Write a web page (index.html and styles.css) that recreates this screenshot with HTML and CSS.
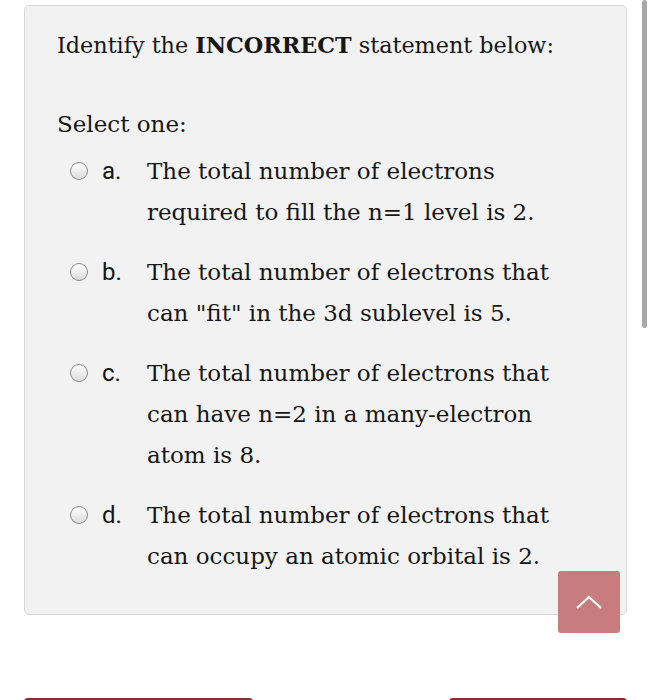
FILE: index.html
```html
<!DOCTYPE html>
<html>
  <head>
    <title>Quiz question</title>
    <link rel="stylesheet" href="styles.css">
  </head>
  <body>
    <div class="page">
      <div class="card">
        <p class="question">Identify the <strong>INCORRECT</strong> statement below:</p>
        <div class="prompt">Select one:</div>
        <div class="answers">
          <label class="answer">
            <span class="radio"></span>
            <span class="letter">a.</span>
            <span class="text">The total number of electrons required to fill the n=1 level is 2.</span>
          </label>
          <label class="answer">
            <span class="radio"></span>
            <span class="letter">b.</span>
            <span class="text">The total number of electrons that can "fit" in the 3d sublevel is 5.</span>
          </label>
          <label class="answer">
            <span class="radio"></span>
            <span class="letter">c.</span>
            <span class="text">The total number of electrons that can have n=2 in a many-electron atom is 8.</span>
          </label>
          <label class="answer">
            <span class="radio"></span>
            <span class="letter">d.</span>
            <span class="text">The total number of electrons that can occupy an atomic orbital is 2.</span>
          </label>
        </div>
        <a class="to-top" href="#">
          <svg width="26" height="14" viewBox="0 0 26 14"><path d="M1 13 L13 2 L25 13" fill="none" stroke="#fff" stroke-width="2.2"/></svg>
        </a>
      </div>
      <div class="nav">
        <a class="nav-btn prev" href="#"></a>
        <a class="nav-btn next" href="#"></a>
      </div>
    </div>
    <div class="scrollbar"></div>
  </body>
</html>
```

FILE: styles.css
```css
body {
  margin: 0;
  background-color: #fff;
  font-family: "DejaVu Serif", serif;
  color: #161616;
  overflow: hidden;
}

.page {
  padding: 5px 26px 0 24px;
}

.card {
  position: relative;
  background-color: #f2f2f2;
  border: 1px solid #d8d8d8;
  border-radius: 5px;
  padding: 26px 20px 30px 32px;
  height: 552px;
}

.question {
  margin: 0;
  font-size: 22.3px;
  line-height: 26px;
}

.question strong {
  font-weight: bold;
}

.prompt {
  margin-top: 53px;
  font-size: 23px;
  line-height: 26px;
}

.answers {
  margin-top: 14px;
}

.answer {
  display: flex;
  align-items: flex-start;
  margin-bottom: 19px;
}

.radio {
  flex: none;
  width: 16px;
  height: 16px;
  margin: 11px 0 0 13px;
  border: 1px solid #8a8a8a;
  border-radius: 50%;
  background: linear-gradient(#ffffff, #dcdcdc);
}

.letter {
  flex: none;
  width: 45px;
  margin-left: 14px;
  font-family: Roboto, sans-serif;
  font-size: 24px;
  line-height: 41px;
}

.text {
  font-size: 23px;
  line-height: 41px;
  max-width: 420px;
}

.to-top {
  position: absolute;
  right: 6px;
  bottom: -19px;
  width: 62px;
  height: 62px;
  border-radius: 3px;
  background-color: #c97c7e;
  display: flex;
  align-items: center;
  justify-content: center;
}

.nav {
  display: flex;
  justify-content: space-between;
  margin-top: 83px;
}

.nav-btn {
  display: block;
  height: 40px;
  background-color: #8f2a2e;
  border-radius: 4px;
}

.prev {
  width: 229px;
}

.next {
  width: 178px;
}

.scrollbar {
  position: absolute;
  top: 0;
  left: 642px;
  width: 5px;
  height: 328px;
  border-radius: 3px;
  background-color: #a8a8a8;
}
```
